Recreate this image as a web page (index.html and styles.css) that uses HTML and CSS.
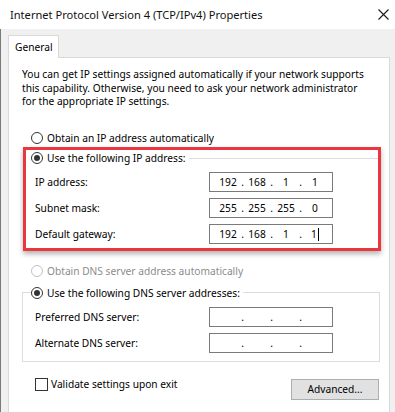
FILE: index.html
```html
<!DOCTYPE html>
<html>
<head>
<meta charset="utf-8">
<link rel="stylesheet" href="styles.css">
</head>
<body>
<div class="window">
  <div class="titlebar">
    <span class="title">Internet Protocol Version 4 (TCP/IPv4) Properties</span>
    <svg class="close" width="11" height="11" viewBox="0 0 11 11"><path d="M0.5 0.5 L10.5 10.5 M10.5 0.5 L0.5 10.5" stroke="#1a1a1a" stroke-width="1.1" fill="none"/></svg>
  </div>
  <div class="client">
    <div class="tabs"><div class="tab">General</div></div>
    <div class="panel">
      <p class="intro">You can get IP settings assigned automatically if your network supports<br>this capability. Otherwise, you need to ask your network administrator<br>for the appropriate IP settings.</p>
      <div class="radio-row auto-ip"><span class="radio"></span><span>Obtain an IP address automatically</span></div>
      <div class="highlight">
        <div class="radio-row legend-row"><span class="radio checked"></span><span>Use the following IP address:</span><span class="rule"></span></div>
        <div class="fields">
          <div class="field"><span class="label">IP address:</span><div class="ipbox"><span class="oct">192</span><span class="dot">.</span><span class="oct">168</span><span class="dot">.</span><span class="oct">1</span><span class="dot">.</span><span class="oct">1</span></div></div>
          <div class="field"><span class="label">Subnet mask:</span><div class="ipbox"><span class="oct">255</span><span class="dot">.</span><span class="oct">255</span><span class="dot">.</span><span class="oct">255</span><span class="dot">.</span><span class="oct">0</span></div></div>
          <div class="field"><span class="label">Default gateway:</span><div class="ipbox"><span class="oct">192</span><span class="dot">.</span><span class="oct">168</span><span class="dot">.</span><span class="oct">1</span><span class="dot">.</span><span class="oct">1<span class="caret"></span></span></div></div>
        </div>
      </div>
      <div class="radio-row disabled"><span class="radio"></span><span>Obtain DNS server address automatically</span></div>
      <fieldset class="group">
        <legend><span class="radio checked"></span><span>Use the following DNS server addresses:</span></legend>
        <div class="fields">
          <div class="field"><span class="label">Preferred DNS server:</span><div class="ipbox"><span class="oct"></span><span class="dot">.</span><span class="oct"></span><span class="dot">.</span><span class="oct"></span><span class="dot">.</span><span class="oct"></span></div></div>
          <div class="field"><span class="label">Alternate DNS server:</span><div class="ipbox"><span class="oct"></span><span class="dot">.</span><span class="oct"></span><span class="dot">.</span><span class="oct"></span><span class="dot">.</span><span class="oct"></span></div></div>
        </div>
      </fieldset>
      <div class="bottom-row">
        <div class="check-row"><span class="checkbox"></span><span>Validate settings upon exit</span></div>
        <div class="button">Advanced...</div>
      </div>
    </div>
  </div>
</div>
</body>
</html>
```

FILE: styles.css
```css
* { box-sizing: border-box; }
html, body { margin: 0; padding: 0; }
body {
  width: 395px;
  height: 412px;
  overflow: hidden;
  background: #f0f0f0;
  font-family: "Noto Sans", "Open Sans", sans-serif;
  font-size: 10.2px;
  color: #000;
}
.window { display: flex; flex-direction: column; height: 412px; }
.titlebar {
  height: 29px;
  background: #fff;
  display: flex;
  align-items: center;
  justify-content: space-between;
  padding: 0 6px 0 10px;
  flex-shrink: 0;
}
.title { font-size: 11.1px; color: #111; }
.close { display: block; margin-top: -1px; }
.client {
  flex: 1;
  border-left: 1px solid #7a7a7a;
  padding: 6px 5px 0 7px;
  display: flex;
  flex-direction: column;
}
.tabs { display: flex; }
.tab {
  width: 51px;
  height: 23px;
  background: #fff;
  border: 1px solid #d9d9d9;
  border-bottom: none;
  margin-bottom: -1px;
  padding-left: 6px;
  display: flex;
  align-items: center;
  position: relative;
  z-index: 1;
}
.panel {
  flex: 1;
  background: #fff;
  border: 1px solid #d9d9d9;
  border-bottom: none;
  padding: 10px 10px 0 13px;
}
.intro { margin: 0; line-height: 13.6px; }
.radio-row { display: flex; align-items: center; height: 16px; }
.radio {
  width: 12px;
  height: 12px;
  border: 1px solid #333;
  border-radius: 50%;
  display: inline-flex;
  align-items: center;
  justify-content: center;
  margin-right: 4px;
  flex-shrink: 0;
  background: #fff;
}
.radio.checked::after {
  content: "";
  width: 6px;
  height: 6px;
  border-radius: 50%;
  background: #333;
}
.auto-ip { margin-top: 21px; padding-left: 9px; }
.highlight {
  margin-top: 1px;
  margin-left: 1px;
  width: 358px;
  border: 3px solid #e9363f;
  box-shadow: 0 3px 5px rgba(0, 0, 0, 0.3);
  padding: 0 0 4px 0;
}
.legend-row { padding-left: 5px; }
.rule { flex: 1; border-top: 1px solid #dcdcdc; margin-left: 3px; margin-top: 1px; }
.highlight .fields { padding-left: 9px; margin-top: 6px; }
.fields { display: flex; flex-direction: column; gap: 6px; }
.field { display: flex; align-items: center; height: 20px; }
.label { width: 174px; flex-shrink: 0; }
.ipbox {
  width: 124px;
  height: 20px;
  border: 1px solid #7a7a7a;
  display: flex;
  align-items: center;
  padding-left: 6px;
}
.oct { width: 24px; text-align: center; }
.dot { width: 5px; text-align: center; }
.caret { display: inline-block; width: 1px; height: 13px; background: #000; vertical-align: -3px; margin-left: 1px; }
.disabled { margin-top: 12px; padding-left: 9px; color: #8c8c8c; }
.disabled .radio { border-color: #c2c2c2; }
.group {
  margin: 6px 0 0 0;
  width: 358px;
  border: 1px solid #dcdcdc;
  padding: 0 0 8px 8px;
  min-width: 0;
}
.group legend {
  display: flex;
  align-items: center;
  height: 16px;
  padding: 0 3px 0 0;
}
.group .fields { padding-left: 4px; margin-top: 6px; }
.bottom-row {
  display: flex;
  justify-content: space-between;
  align-items: flex-start;
  margin-top: 16px;
  width: 357px;
}
.check-row { display: flex; align-items: center; height: 13px; margin-left: 13px; }
.checkbox { width: 13px; height: 13px; border: 1px solid #333; margin-right: 3px; background: #fff; }
.button {
  margin-top: 1px;
  width: 88px;
  height: 21px;
  background: #e1e1e1;
  border: 1px solid #adadad;
  display: flex;
  align-items: center;
  justify-content: center;
}
```
